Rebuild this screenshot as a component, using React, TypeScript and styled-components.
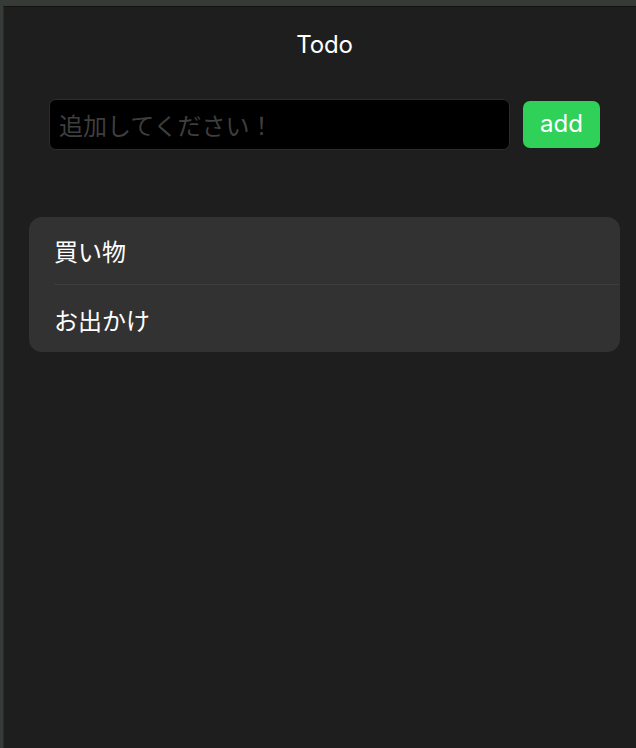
import React from "react";
import styled, { createGlobalStyle } from "styled-components";

const GlobalStyle = createGlobalStyle`
  html, body {
    margin: 0;
    padding: 0;
    background: #1e1e1e;
  }
  body {
    font-family: "Inter", "Noto Sans CJK JP", sans-serif;
    -webkit-font-smoothing: antialiased;
  }
  * { box-sizing: border-box; }
`;

const Frame = styled.div`
  min-height: 748px;
  border-top: 6px solid #373b38;
  border-left: 3px solid #373b38;
  display: flex;
  flex-direction: column;
`;

const Main = styled.main`
  flex: 1;
  border-top: 1px solid #121212;
  border-left: 1px solid #2b2b2b;
  background: #1e1e1e;
  padding: 23px 0 0 25px;
  display: flex;
  flex-direction: column;
`;

const Title = styled.h1`
  margin: 0;
  width: 591px;
  text-align: center;
  font-family: "Inter", "Noto Sans CJK JP", sans-serif;
  font-weight: 400;
  font-size: 24px;
  line-height: 30px;
  letter-spacing: -0.2px;
  color: #ffffff;
`;

const Form = styled.form`
  margin: 39px 0 0 20px;
  display: flex;
  align-items: center;
  gap: 13px;
`;

const Input = styled.input`
  width: 461px;
  height: 51px;
  padding: 0 9px;
  background: #000000;
  border: 1px solid #2c2c2c;
  border-radius: 7px;
  outline: none;
  color: #ffffff;
  font-family: "Noto Sans CJK JP", sans-serif;
  font-size: 24px;
  &::placeholder {
    color: #3e3e3e;
  }
`;

const AddButton = styled.button`
  width: 77px;
  height: 47px;
  border: none;
  border-radius: 7px;
  background: #30d158;
  color: #ffffff;
  font-family: "Inter", sans-serif;
  font-size: 24px;
  padding: 0 0 2px;
  cursor: pointer;
`;

const List = styled.ul`
  list-style: none;
  margin: 67px 0 0 0;
  padding: 0;
  width: 591px;
  background: #323232;
  border-radius: 13px;
  overflow: hidden;
`;

const Item = styled.li<{ $divider?: boolean }>`
  height: ${(p) => (p.$divider ? 68 : 67)}px;
  display: flex;
  align-items: center;
  padding: ${(p) => (p.$divider ? "1px 0 0 0" : "0 0 0 25px")};
  margin-left: ${(p) => (p.$divider ? "25px" : "0")};
  border-top: ${(p) => (p.$divider ? "1px solid #3d3d3d" : "none")};
  font-family: "Noto Sans CJK JP", sans-serif;
  font-size: 24px;
  color: #ffffff;
`;

const todos = ["買い物", "お出かけ"];

export default function App() {
  return (
    <>
      <GlobalStyle />
      <Frame>
        <Main>
          <Title>Todo</Title>
          <Form onSubmit={(e) => e.preventDefault()}>
            <Input placeholder="追加してください！" />
            <AddButton type="submit">add</AddButton>
          </Form>
          <List>
            {todos.map((t, i) => (
              <Item key={t} $divider={i > 0}>
                {t}
              </Item>
            ))}
          </List>
        </Main>
      </Frame>
    </>
  );
}
